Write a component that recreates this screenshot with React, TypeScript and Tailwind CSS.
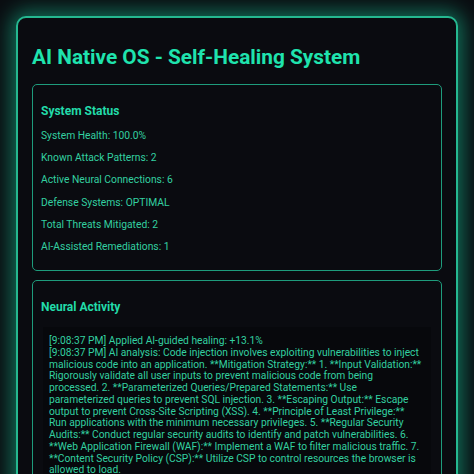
import React from "react";

const stats = [
  "System Health: 100.0%",
  "Known Attack Patterns: 2",
  "Active Neural Connections: 6",
  "Defense Systems: OPTIMAL",
  "Total Threats Mitigated: 2",
  "AI-Assisted Remediations: 1",
];

const logs = [
  "[9:08:37 PM] Applied AI-guided healing: +13.1%",
  "[9:08:37 PM] AI analysis: Code injection involves exploiting vulnerabilities to inject malicious code into an application. **Mitigation Strategy:** 1. **Input Validation:** Rigorously validate all user inputs to prevent malicious code from being processed. 2. **Parameterized Queries/Prepared Statements:** Use parameterized queries to prevent SQL injection. 3. **Escaping Output:** Escape output to prevent Cross-Site Scripting (XSS). 4. **Principle of Least Privilege:** Run applications with the minimum necessary privileges. 5. **Regular Security Audits:** Conduct regular security audits to identify and patch vulnerabilities. 6. **Web Application Firewall (WAF):** Implement a WAF to filter malicious traffic. 7. **Content Security Policy (CSP):** Utilize CSP to control resources the browser is allowed to load.",
  "[9:08:36 PM] Threat detected: Code injection attempt",
];

export default function App() {
  return (
    <div className="min-h-screen bg-[#0a0d11] p-4 font-['Roboto','Liberation_Sans',sans-serif]">
      <div className="min-h-[520px] rounded-[10px] border-2 border-[#25b890] bg-[#0a0b10] px-[14px] pt-[26px] pb-4 shadow-[0_0_20px_5px_rgba(24,190,145,0.55)]">
        <h1 className="text-[20.8px] leading-[26px] font-bold text-[#1fe3ae]">
          AI Native OS - Self-Healing System
        </h1>

        <section className="mt-[14px] rounded-[5px] border border-[#1e9c7c] px-2 pt-[18px] pb-[12px]">
          <h2 className="text-[12px] leading-4 font-bold text-[#22dcaa]">System Status</h2>
          <div className="mt-[6px] flex flex-col">
            {stats.map((s) => (
              <p key={s} className="text-[10.3px] leading-[22.2px] text-[#33d0a0]">
                {s}
              </p>
            ))}
          </div>
        </section>

        <section className="mt-[9px] rounded-[5px] border border-[#1e9c7c] px-2 pt-[18px] pb-[11px]">
          <h2 className="text-[12px] leading-4 font-bold text-[#22dcaa]">Neural Activity</h2>
          <div className="mx-[2px] mt-[12px] bg-[#07080c] pl-[6px] pr-[8px] pt-[8px] pb-2">
            {logs.map((l, i) => (
              <div key={i} className="text-[10.25px] leading-[11.75px] text-[#33d0a0]">
                {l}
              </div>
            ))}
          </div>
        </section>
      </div>
    </div>
  );
}
